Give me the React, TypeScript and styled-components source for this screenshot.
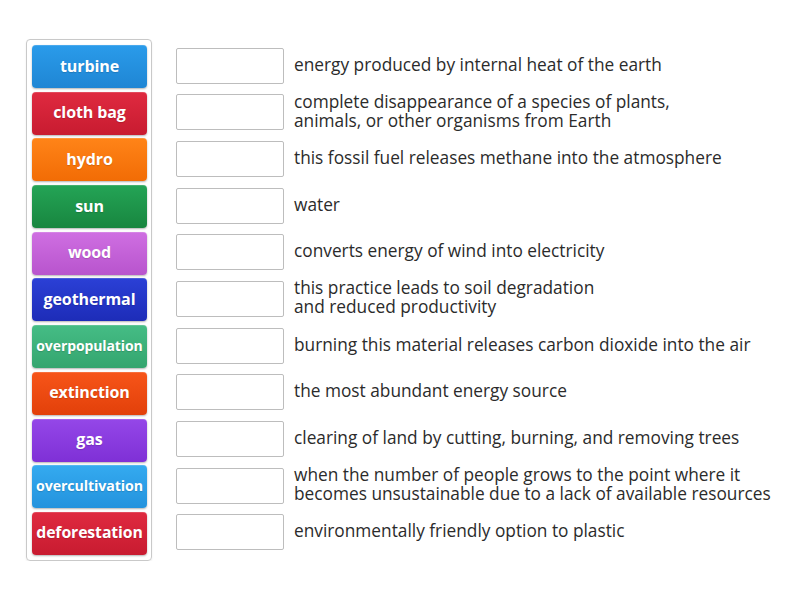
import React from "react";
import styled, { createGlobalStyle } from "styled-components";

const Global = createGlobalStyle`
  html, body { margin: 0; padding: 0; background: #fff; }
  body { font-family: "Open Sans", "Liberation Sans", sans-serif; }
`;

const Page = styled.div`
  display: flex;
  align-items: flex-start;
  gap: 24px;
  padding: 39px 0 0 26px;
`;

const Bank = styled.div`
  display: flex;
  flex-direction: column;
  gap: 3.7px;
  padding: 5px 4px 5px 5px;
  border: 1px solid #c9c9c9;
  border-radius: 4px;
  box-shadow: 0 1px 2px rgba(0,0,0,0.08);
`;

const Tile = styled.div<{ $c: string; $d: string; $fs: number }>`
  width: 115px;
  height: 43px;
  display: flex;
  align-items: center;
  justify-content: center;
  border-radius: 4px;
  background: linear-gradient(to bottom, ${(p) => p.$c}, ${(p) => p.$d});
  box-shadow: 0 1px 2px rgba(0,0,0,0.3), inset 0 1px 0 rgba(255,255,255,0.15);
  color: #fff;
  font-weight: 700;
  font-size: ${(p) => p.$fs}px;
  letter-spacing: -0.1px;
  white-space: nowrap;
  overflow: visible;
  text-shadow: 0 1px 1px rgba(0,0,0,0.15);
  padding-bottom: 2px;
  box-sizing: border-box;
`;

const Rows = styled.div`
  display: flex;
  flex-direction: column;
  gap: 3.7px;
  padding-top: 5px;
`;

const Row = styled.div`
  height: 43px;
  display: flex;
  align-items: center;
  gap: 10px;
`;

const Slot = styled.div`
  width: 106px;
  height: 34px;
  border: 1px solid #bdbdbd;
  border-radius: 2px;
  background: #fff;
  flex: none;
`;

const Clue = styled.div`
  font-size: 17.3px;
  line-height: 19px;
  color: #2b2b2b;
  white-space: pre-line;
  margin-top: -3px;
`;

const tiles: [string, string, string, number][] = [
  ["turbine", "#2a9bea", "#1f86d4", 16],
  ["cloth bag", "#df2a40", "#c81b30", 16],
  ["hydro", "#ff8418", "#f26c05", 16],
  ["sun", "#24a456", "#18863f", 16],
  ["wood", "#cf6fe2", "#b854cd", 16],
  ["geothermal", "#2b40d6", "#1d2cb8", 16],
  ["overpopulation", "#45bd85", "#34a56f", 14],
  ["extinction", "#f75519", "#e2400a", 16],
  ["gas", "#9447e8", "#7f30d6", 16],
  ["overcultivation", "#34aaf0", "#2493dd", 14.2],
  ["deforestation", "#df2a40", "#c81b30", 15.8],
];

const clues = [
  "energy produced by internal heat of the earth",
  "complete disappearance of a species of plants,\nanimals, or other organisms from Earth",
  "this fossil fuel releases methane into the atmosphere",
  "water",
  "converts energy of wind into electricity",
  "this practice leads to soil degradation\nand reduced productivity",
  "burning this material releases carbon dioxide into the air",
  "the most abundant energy source",
  "clearing of land by cutting, burning, and removing trees",
  "when the number of people grows to the point where it\nbecomes unsustainable due to a lack of available resources",
  "environmentally friendly option to plastic",
];

export default function App() {
  return (
    <>
      <Global />
      <Page>
        <Bank>
          {tiles.map(([t, c, d, fs]) => (
            <Tile key={t} $c={c} $d={d} $fs={fs}>
              {t}
            </Tile>
          ))}
        </Bank>
        <Rows>
          {clues.map((c, i) => (
            <Row key={i}>
              <Slot />
              <Clue>{c}</Clue>
            </Row>
          ))}
        </Rows>
      </Page>
    </>
  );
}
